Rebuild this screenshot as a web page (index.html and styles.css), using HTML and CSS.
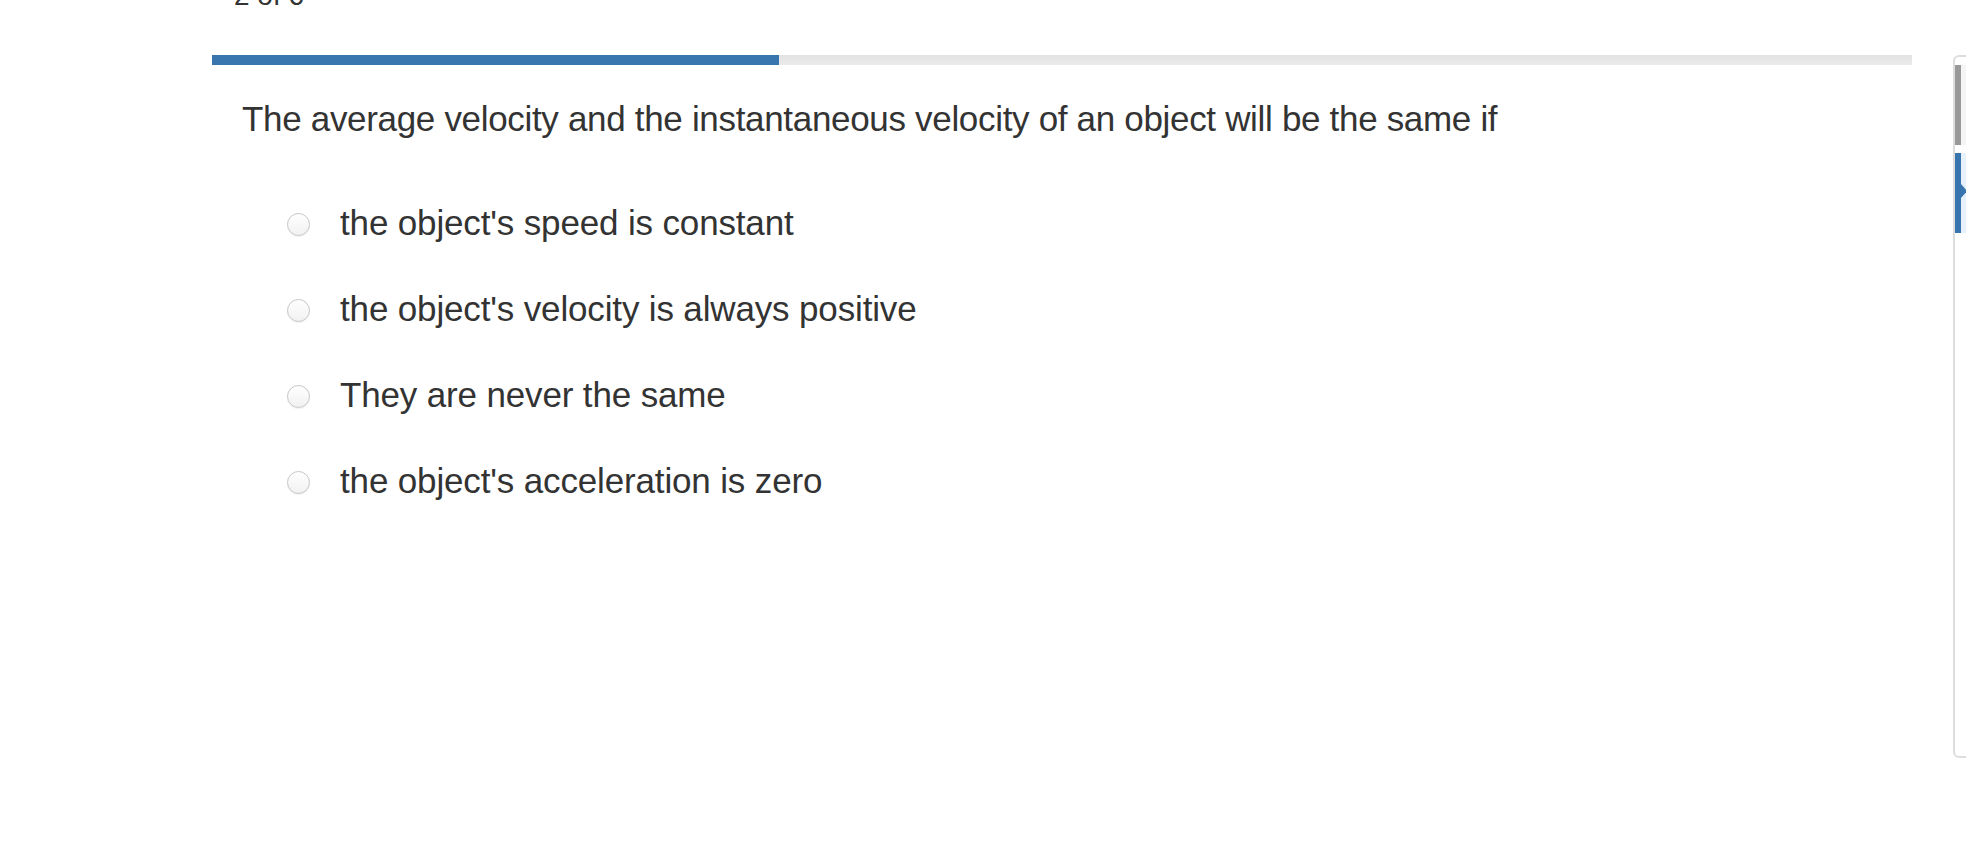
FILE: index.html
```html
<!DOCTYPE html>
<html lang="en">
<head>
<meta charset="utf-8">
<title>Question 2 of 6</title>
<link rel="stylesheet" href="styles.css">
</head>
<body>
<div class="page">
  <div class="counter">2 of 6</div>
  <div class="row">
    <main class="quiz">
      <div class="progress"><div class="progress-fill" style="width: 33.333%"></div></div>
      <p class="question">The average velocity and the instantaneous velocity of an object will be the same if</p>
      <ul class="options">
        <li class="option"><span class="radio"></span><span class="label">the object's speed is constant</span></li>
        <li class="option"><span class="radio"></span><span class="label">the object's velocity is always positive</span></li>
        <li class="option"><span class="radio"></span><span class="label">They are never the same</span></li>
        <li class="option"><span class="radio"></span><span class="label">the object's acceleration is zero</span></li>
      </ul>
    </main>
    <aside class="side">
      <div class="side-item done"><span class="strip"></span></div>
      <div class="side-item current"><span class="strip"></span></div>
    </aside>
  </div>
</div>
</body>
</html>
```

FILE: styles.css
```css
html, body {
  margin: 0;
  padding: 0;
  background: #ffffff;
  overflow: hidden;
  height: 100%;
}

body {
  font-family: "Liberation Sans", Arial, Helvetica, sans-serif;
  color: #333333;
}

.page {
  padding-left: 212px;
}

.counter {
  margin-top: -21px;
  height: 34px;
  line-height: 34px;
  font-size: 28px;
  padding-left: 22px;
  color: #333333;
}

.row {
  display: flex;
  align-items: flex-start;
  margin-top: 42px;
  gap: 41px;
}

.quiz {
  width: 1700px;
  flex-shrink: 0;
}

.progress {
  height: 10px;
  background: linear-gradient(#e2e2e2, #ebebeb);
  overflow: hidden;
}

.progress-fill {
  height: 100%;
  background: #3874ae;
}

.question {
  margin: 33px 0 0 0;
  padding-left: 30px;
  font-size: 35px;
  line-height: 42px;
  letter-spacing: -0.32px;
}

.options {
  list-style: none;
  margin: 62px 0 0 0;
  padding: 0 0 0 75px;
  display: flex;
  flex-direction: column;
  gap: 44px;
}

.option {
  display: flex;
  align-items: center;
  gap: 30px;
  height: 42px;
}

.radio {
  width: 21px;
  height: 21px;
  border: 1px solid #c6c6c6;
  border-radius: 50%;
  background: linear-gradient(#ffffff, #f1f1f1);
  box-shadow: 0 1px 1px rgba(0, 0, 0, 0.05);
  flex-shrink: 0;
  position: relative;
  top: 1px;
}

.label {
  font-size: 35px;
  line-height: 42px;
  letter-spacing: -0.15px;
}

.side {
  width: 260px;
  height: 703px;
  flex-shrink: 0;
  border: 2px solid #dddddd;
  border-radius: 6px;
  box-sizing: border-box;
  padding-top: 8px;
  display: flex;
  flex-direction: column;
  gap: 8px;
}

.side-item {
  height: 80px;
  display: flex;
  position: relative;
}

.strip {
  width: 6px;
  height: 100%;
}

.done {
  background: #f5f5f5;
}

.done .strip {
  background: #999999;
}

.current {
  background: #e7f1fb;
}

.current .strip {
  background: #3874ae;
}

.current::after {
  content: "";
  position: absolute;
  left: 6px;
  top: 31px;
  border-left: 6px solid #3874ae;
  border-top: 7px solid transparent;
  border-bottom: 7px solid transparent;
}
```
